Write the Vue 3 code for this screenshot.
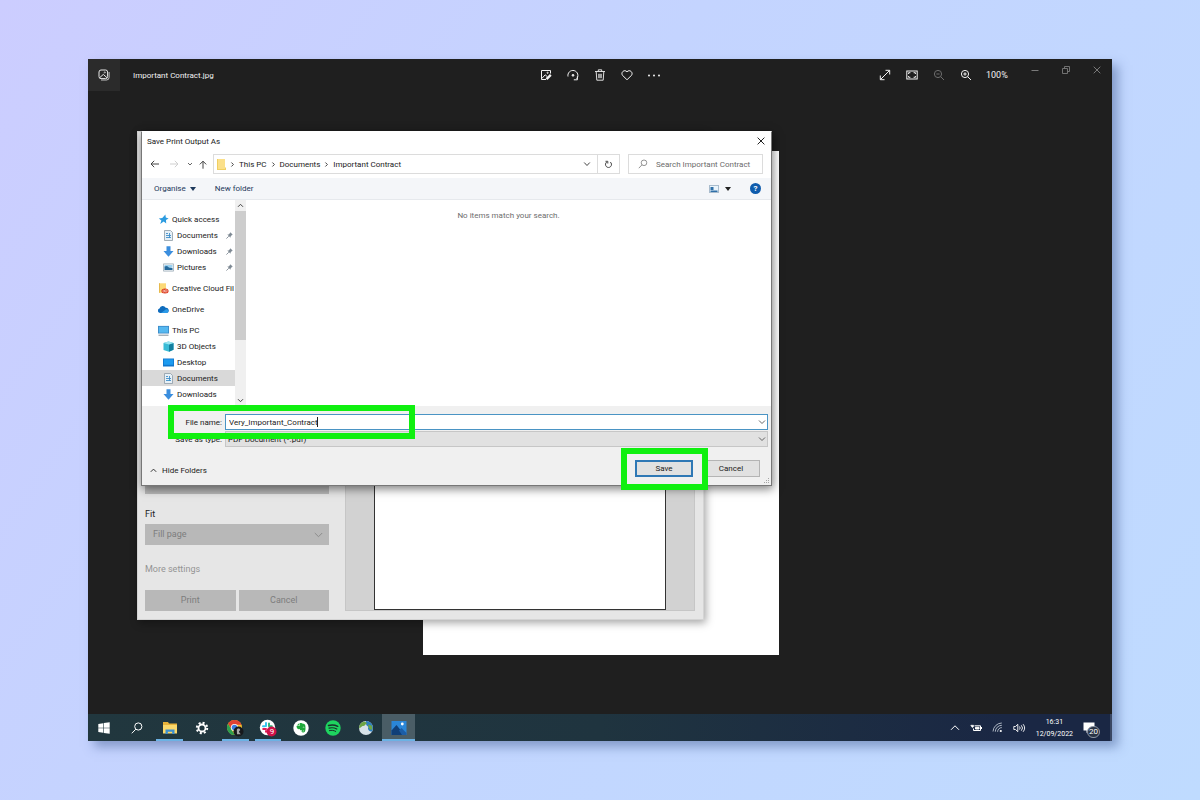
<template>
  <div class="backdrop">
    <div class="desktop">
      <header class="viewer-bar">
        <div class="viewer-title">
          <span class="app-tile">
            <svg width="12" height="12" viewBox="0 0 12 12" fill="none" stroke="#e8e8e8">
              <rect x="1" y="1" width="8.6" height="8.6" rx="2" />
              <path d="M3 11h5.5a2.6 2.6 0 0 0 2.6-2.6V3" stroke-width=".8" />
              <path d="M1.6 8.8 5.3 5.4l3.8 3.4" />
              <circle cx="6.8" cy="3.4" r=".6" stroke-width=".7" />
            </svg>
          </span>
          <h1>Important Contract.jpg</h1>
        </div>

        <div class="viewer-tools">
          <button type="button" class="tool" aria-label="Edit image">
            <svg width="12" height="12" viewBox="0 0 12 12" fill="none" stroke="#f2f2f2">
              <path d="M10.5 4.5v-3h-9v9H6M1.8 9.5l3.4-3.7 2 1.8" />
              <circle cx="7.6" cy="3.8" r=".6" />
              <path d="m6.5 10.2 4.3-4.3" stroke-width="2.4" />
            </svg>
          </button>
          <button type="button" class="tool" aria-label="Rotate">
            <svg width="12" height="12" viewBox="0 0 12 12" fill="none" stroke="#f2f2f2">
              <path d="M1 7.5A5 5 0 1 1 9.6 9.8M6.8 10.8h3.6V7.2" />
              <circle cx="6" cy="6.3" r=".9" fill="#f2f2f2" />
            </svg>
          </button>
          <button type="button" class="tool" aria-label="Delete">
            <svg width="12" height="12" viewBox="0 0 12 12" fill="none" stroke="#f2f2f2">
              <path d="M1 2.5h10M4.3 2.3V.8h3.4v1.5M2.2 2.8l.6 8.4h6.4l.6-8.4M4.8 4.8v4.4M6 4.8v4.4M7.2 4.8v4.4" stroke-width=".9" />
            </svg>
          </button>
          <button type="button" class="tool" aria-label="Favourite">
            <svg width="12" height="12" viewBox="0 0 12 12" fill="none" stroke="#f2f2f2">
              <path d="M6 10.8 1.5 6.3C-.6 3.6 3.3-.2 6 2.8c2.7-3 6.6.8 4.5 3.5Z" />
            </svg>
          </button>
          <button type="button" class="tool" aria-label="See more">
            <svg width="14" height="12" viewBox="0 0 14 12" fill="#f2f2f2">
              <circle cx="2" cy="6.5" r="1" />
              <circle cx="7" cy="6.5" r="1" />
              <circle cx="12" cy="6.5" r="1" />
            </svg>
          </button>
        </div>

        <div class="viewer-right">
          <div class="zoom-tools">
            <button type="button" class="tool" aria-label="Full screen">
              <svg width="12" height="12" viewBox="0 0 12 12" fill="none" stroke="#f2f2f2">
                <path d="M1.5 10.5 10.5 1.5M6.5 1.3h4.2v4.2M1.3 6.5v4.2h4.2" />
              </svg>
            </button>
            <button type="button" class="tool" aria-label="Fit to window">
              <svg width="12" height="12" viewBox="0 0 12 12" fill="none" stroke="#f2f2f2">
                <rect x=".8" y="2" width="10.4" height="8" />
                <path d="M2.6 5V3.7h1.8M7.6 3.7h1.8V5M9.4 7v1.3H7.6M4.4 8.3H2.6V7" />
              </svg>
            </button>
            <button type="button" class="tool" aria-label="Zoom out">
              <svg width="12" height="12" viewBox="0 0 12 12" fill="none" stroke="#6d6d6d">
                <circle cx="5" cy="5" r="3.6" />
                <path d="M7.7 7.7 11 11M3.4 5h3.2" />
              </svg>
            </button>
            <button type="button" class="tool" aria-label="Zoom in">
              <svg width="12" height="12" viewBox="0 0 12 12" fill="none" stroke="#f2f2f2">
                <circle cx="5" cy="5" r="3.6" />
                <path d="M7.7 7.7 11 11M3.3 5h3.4M5 3.3v3.4" />
              </svg>
            </button>
            <span class="zoom-level">100%</span>
          </div>
          <div class="window-controls">
            <button type="button" aria-label="Minimise">
              <svg width="8" height="8" viewBox="0 0 8 8" fill="none" stroke="#7a7a7a"><path d="M.5 4.5h7" /></svg>
            </button>
            <button type="button" aria-label="Restore">
              <svg width="8" height="8" viewBox="0 0 8 8" fill="none" stroke="#7a7a7a" stroke-width=".9">
                <path d="M.5 2.5h5v5h-5zM2.5 2.5v-2h5v5h-2" />
              </svg>
            </button>
            <button type="button" aria-label="Close">
              <svg width="8" height="8" viewBox="0 0 8 8" fill="none" stroke="#7a7a7a"><path d="m.7.7 6.6 6.6M7.3.7.7 7.3" /></svg>
            </button>
          </div>
        </div>
      </header>

      <main class="canvas">
        <div class="photo"></div>

        <section class="print-window">
          <form class="print-options" @submit.prevent>
            <select v-model="quality" class="grey-select" aria-label="Quality" disabled>
              <option>Normal</option>
            </select>
            <label for="fit">Fit</label>
            <div class="select-wrap">
              <select id="fit" v-model="fit" class="grey-select" disabled>
                <option>Fill page</option>
              </select>
              <svg width="9" height="9" viewBox="0 0 9 9" fill="none" stroke="#8c8c8c"><path d="m.8 2.5 3.7 3.7 3.7-3.7" /></svg>
            </div>
            <a href="#" class="more">More settings</a>
            <div class="print-buttons">
              <button type="button" disabled>Print</button>
              <button type="button" disabled>Cancel</button>
            </div>
          </form>
          <div class="preview">
            <div class="preview-page"></div>
          </div>
        </section>

        <section class="save-dialog">
          <div class="dialog-title">
            <h2>Save Print Output As</h2>
            <button type="button" aria-label="Close">
              <svg width="8" height="8" viewBox="0 0 8 8" fill="none" stroke="#222"><path d="m.6.6 6.8 6.8M7.4.6.6 7.4" /></svg>
            </button>
          </div>

          <div class="nav-row">
            <button type="button" class="nav-btn" aria-label="Back">
              <svg width="10" height="8" viewBox="0 0 10 8" fill="none" stroke="#444"><path d="M9 4H1M4.2.8 1 4l3.2 3.2" /></svg>
            </button>
            <button type="button" class="nav-btn" aria-label="Forward">
              <svg width="10" height="8" viewBox="0 0 10 8" fill="none" stroke="#cfcfcf"><path d="M1 4h8M5.8.8 9 4 5.8 7.2" /></svg>
            </button>
            <button type="button" class="nav-btn small" aria-label="Recent locations">
              <svg width="6" height="6" viewBox="0 0 6 6" fill="none" stroke="#666"><path d="m1 2 2 2 2-2" /></svg>
            </button>
            <button type="button" class="nav-btn small" aria-label="Up">
              <svg width="8" height="9" viewBox="0 0 8 9" fill="none" stroke="#444"><path d="M4 8.7V1.2M.8 4.4 4 1.2l3.2 3.2" /></svg>
            </button>
            <nav class="address">
              <svg class="folder" width="9" height="11" viewBox="0 0 9 11">
                <path d="M0 0h8v8l1 1v2H0z" fill="#f0cf62" />
                <path d="M1 0h7v10H1z" fill="#fbe08a" />
              </svg>
              <template v-for="crumb in crumbs" :key="crumb">
                <svg width="5" height="7" viewBox="0 0 5 7" fill="none" stroke="#444"><path d="m1.4 1.5 2 2-2 2" /></svg>
                <a href="#">{{ crumb }}</a>
              </template>
              <button type="button" class="drop" aria-label="Previous locations">
                <svg width="8" height="8" viewBox="0 0 8 8" fill="none" stroke="#444"><path d="m1.2 2.5 2.8 3 2.8-3" /></svg>
              </button>
              <button type="button" class="refresh" aria-label="Refresh">
                <svg width="9" height="9" viewBox="0 0 9 9" fill="none" stroke="#444">
                  <path d="M6.2 2a3 3 0 1 1-3.4 0M1.5 1.3h2.3v2.2" />
                </svg>
              </button>
            </nav>
            <div class="search">
              <svg width="10" height="10" viewBox="0 0 10 10" fill="none" stroke="#888" stroke-width=".9">
                <circle cx="6" cy="3.8" r="2.8" />
                <path d="M4 5.8.8 9.2" />
              </svg>
              <input v-model="search" type="text" aria-label="Search" placeholder="Search Important Contract" />
            </div>
          </div>

          <div class="command-bar">
            <button type="button">
              Organise
              <svg width="6" height="4" viewBox="0 0 6 4" fill="#1e395b"><path d="M0 0h6L3 4z" /></svg>
            </button>
            <button type="button">New folder</button>
            <button type="button" class="view-btn" aria-label="Change view">
              <svg width="10" height="8" viewBox="0 0 10 8">
                <path d="M0 0h10v8H0z" fill="#a9bccd" />
                <path d="M1 1h8v6H1z" fill="#eaf4fb" />
                <path d="M1.5 2h3v3h-3zM1.5 5.5h7V7h-7z" fill="#2f6fa8" />
              </svg>
              <svg width="6" height="4" viewBox="0 0 6 4" fill="#222"><path d="M0 0h6L3 4z" /></svg>
            </button>
            <button type="button" class="help" aria-label="Help">?</button>
          </div>

          <div class="dialog-body">
            <nav class="tree">
              <ul v-for="(group, i) in tree" :key="i">
                <li v-for="item in group" :key="item.name">
                  <a href="#" :class="{ child: item.child, selected: item.selected }">
                    <svg v-if="item.icon === 'star'" width="11" height="11" viewBox="0 0 11 11">
                      <path d="m7.4.5.4 3 2.8.9L8 6l.2 3.400-2.500-2-3.500 2.600 1.200-3.500L.8 4.600l3.500-.5z" fill="#2b9be0" />
                    </svg>
                    <svg v-else-if="item.icon === 'document'" width="11" height="11" viewBox="0 0 11 11">
                      <path d="M1.500.5h6l2 2v8h-8z" fill="#e6f0f7" stroke="#8d9aa5" stroke-width=".8" />
                      <path d="M3 3.500h2M3 5.500h5M3 7.500h5M6.500 3v5" stroke="#3f8fc9" stroke-width=".9" />
                    </svg>
                    <svg v-else-if="item.icon === 'download'" width="11" height="11" viewBox="0 0 11 11">
                      <path d="M3.500.3h4V5h3l-5 5.800L.5 5h3z" fill="#3b8ede" />
                    </svg>
                    <svg v-else-if="item.icon === 'picture'" width="11" height="11" viewBox="0 0 11 11">
                      <path d="M.4 1.900h10.200v7.200H.4z" fill="#f4f8fb" stroke="#9ba9b5" stroke-width=".8" />
                      <path d="M1.500 3h8v2.500h-8z" fill="#9bd2f2" />
                      <path d="M1.500 4.500 4 4l2 1.600 3.500.4v2h-8z" fill="#256a9c" />
                    </svg>
                    <svg v-else-if="item.icon === 'cloud-folder'" width="11" height="11" viewBox="0 0 11 11">
                      <path d="M1 .3h7v9.500H1z" fill="#fcd978" />
                      <path d="M1 .3h1v9.500H1z" fill="#e6b94c" />
                      <ellipse cx="7" cy="8" rx="3.600" ry="2.500" fill="#dc3b1f" />
                      <circle cx="5.800" cy="8.100" r="1" fill="none" stroke="#fff" stroke-width=".5" />
                      <circle cx="8" cy="7.900" r="1.200" fill="none" stroke="#fff" stroke-width=".5" />
                    </svg>
                    <svg v-else-if="item.icon === 'onedrive'" width="11" height="11" viewBox="0 0 11 11">
                      <path d="M2.200 9A2.300 2.300 0 0 1 1.500 4.500 3.400 3.400 0 0 1 7.700 3.800 2.700 2.700 0 0 1 9 9z" fill="#0f6cbd" />
                      <path d="M3 9 8 5.300A1.900 1.900 0 0 1 9 9z" fill="#2b9ae8" />
                    </svg>
                    <svg v-else-if="item.icon === 'pc'" width="11" height="11" viewBox="0 0 11 11">
                      <path d="M0 .9h11v7.600H0z" fill="#3b87c4" />
                      <path d="M.8 1.700h9.400v6H.8z" fill="#55b8f0" />
                      <path d="M.5 10.200h10" stroke="#7e8e9a" />
                    </svg>
                    <svg v-else-if="item.icon === 'cube'" width="11" height="11" viewBox="0 0 11 11">
                      <path d="m.5 2 5-1.500L10.500 2v6.700l-4.500 2L.5 9z" fill="#39bcd6" />
                      <path d="m6 3.500 4.500-1.500v6.700l-4.500 2z" fill="#14809f" />
                      <path d="m.5 2 5-1.500L10.500 2 6 3.500z" fill="#9be6f1" />
                    </svg>
                    <svg v-else width="11" height="11" viewBox="0 0 11 11">
                      <path d="M0 1.500h11v8H0z" fill="#1176cc" />
                      <path d="M.8 2.300h9.400v5.500H.8z" fill="#1c9bf0" />
                    </svg>
                    <span>{{ item.name }}</span>
                    <svg v-if="item.pinned" class="pin" width="7" height="7" viewBox="0 0 7 7">
                      <path d="m4.300.2 2.500 2.500-.9.300-1.300 1.400-.1 1.400L1.300 2.600l1.400-.2L4 1.100z" fill="#7f8a94" />
                      <path d="M2.800 4.200.4 6.600" stroke="#7f8a94" stroke-width=".9" />
                    </svg>
                  </a>
                </li>
              </ul>
            </nav>
            <div class="scrollbar">
              <svg width="7" height="7" viewBox="0 0 7 7" fill="none" stroke="#444"><path d="m1 4.800 2.500-2.500L6 4.800" /></svg>
              <div class="track"><div class="thumb"></div></div>
              <svg width="7" height="7" viewBox="0 0 7 7" fill="none" stroke="#444"><path d="m1 2.200 2.500 2.500L6 2.200" /></svg>
            </div>
            <p class="empty">No items match your search.</p>
          </div>

          <form class="dialog-footer" @submit.prevent>
            <div class="field">
              <label for="file-name">File name:</label>
              <div class="select-wrap">
                <input id="file-name" v-model="fileName" type="text" />
                <span class="caret"></span>
                <svg width="8" height="8" viewBox="0 0 8 8" fill="none" stroke="#555" stroke-width=".9"><path d="m1 2.5 3 3 3-3" /></svg>
              </div>
            </div>
            <div class="field">
              <label for="file-type">Save as type:</label>
              <div class="select-wrap">
                <select id="file-type" v-model="fileType">
                  <option>PDF Document (*.pdf)</option>
                </select>
                <svg width="8" height="8" viewBox="0 0 8 8" fill="none" stroke="#555" stroke-width=".9"><path d="m1 2.5 3 3 3-3" /></svg>
              </div>
            </div>
            <div class="actions">
              <button type="button" class="hide-folders">
                <svg width="7" height="7" viewBox="0 0 7 7" fill="none" stroke="#333"><path d="m.8 4.800 2.700-2.700 2.700 2.700" /></svg>
                Hide Folders
              </button>
              <button type="submit" class="save">Save</button>
              <button type="button" class="cancel">Cancel</button>
            </div>
          </form>
          <svg class="grip" width="6" height="6" viewBox="0 0 6 6" fill="#a5a5a5">
            <path d="M4 0h1v1H4zM4 2h1v1H4zM2 2h1v1H2zM4 4h1v1H4zM2 4h1v1H2zM0 4h1v1H0z" />
          </svg>
          <div class="mark mark-name"></div>
          <div class="mark mark-save"></div>
        </section>
      </main>

      <footer class="taskbar">
        <div class="apps">
          <button type="button" aria-label="Start">
            <svg width="12" height="12" viewBox="0 0 12 12" fill="#fff">
              <path d="m.3 1.900 4.900-.7v4.500H.3zM5.800 1.100 11.700.3v5.400H5.800zM.3 6.300h4.900v4.500l-4.900-.7zM5.800 6.300h5.900v5.400l-5.900-.8z" />
            </svg>
          </button>
          <button type="button" aria-label="Search">
            <svg width="12" height="12" viewBox="0 0 12 12" fill="none" stroke="#fff">
              <circle cx="7.300" cy="4.500" r="3.600" />
              <path d="M4.800 7.200.8 11.300" />
            </svg>
          </button>
          <button type="button" class="running" aria-label="File Explorer">
            <svg width="16" height="14" viewBox="0 0 16 14">
              <path d="M1 1h5l1 1.500h8V12H1z" fill="#e9b33a" />
              <path d="M1 4h14v8.500H1z" fill="#fbd96c" />
              <path d="M3.500 13V8.500h9V13h-2.300v-2.300H5.800V13z" fill="#3d8fd0" />
            </svg>
          </button>
          <button type="button" aria-label="Settings">
            <svg width="14" height="14" viewBox="0 0 14 14" fill="none" stroke="#fff">
              <circle cx="7" cy="7" r="3.500" stroke-width="1.800" />
              <circle cx="7" cy="7" r="5.200" stroke-width="2" stroke-dasharray="2.040 2.040" />
            </svg>
          </button>
          <button type="button" class="running" aria-label="Chrome">
            <svg width="18" height="18" viewBox="0 0 18 18">
              <circle cx="8.500" cy="8.500" r="7.500" fill="#f6c12d" />
              <path d="M2 4.800a7.500 7.500 0 0 1 13.500.9H8.500L5.300 10z" fill="#df4132" />
              <path d="M2 4.800 6 11.500l3 4.500A7.500 7.500 0 0 1 2 4.800" fill="#2d9e4f" />
              <circle cx="8.500" cy="8.500" r="3.600" fill="#fff" />
              <circle cx="8.500" cy="8.500" r="2.800" fill="#3b7de0" />
              <circle cx="12.500" cy="12.500" r="5" fill="#17191c" />
              <path d="M10.800 11c.4-2 3.400-1.800 3.400.2l-1.200 1 .3 1.300 1.500 1.700h-3.800z" fill="#a9a9a9" />
            </svg>
          </button>
          <button type="button" class="running" aria-label="Slack">
            <svg width="18" height="18" viewBox="0 0 18 18">
              <circle cx="8.500" cy="8.500" r="7.700" fill="#fff" />
              <g fill="none" stroke-width="2" stroke-linecap="round">
                <path d="M7 4v3M4 7.200h1.500" stroke="#36c5f0" />
                <path d="M10 4.500V7M12.800 7.200H10" stroke="#2eb67d" />
                <path d="M4.200 10H7M7 12.800V12" stroke="#e01e5a" />
              </g>
              <circle cx="12.500" cy="12.500" r="5" fill="#cf1047" />
            </svg>
            <span class="count">9</span>
          </button>
          <button type="button" aria-label="Evernote">
            <svg width="16" height="16" viewBox="0 0 16 16">
              <circle cx="8" cy="8" r="7.700" fill="#fff" />
              <path d="M6.600 3.300c1.500-.5 2.700-.2 3.200.4 2.500.2 2.700 1.300 2.700 4.300s-.6 4.600-2.300 4.600c-1.900 0-2.200-2-.8-2.600-1.700.7-2.600.2-2.700-1-1.900.6-3.100-.7-3.200-3h3.100z" fill="#1fa83a" />
              <path d="M3.700 5.500 6.100 3.300v2.200z" fill="#1fa83a" />
              <path d="M10 7.600c.2-.7 1-.7 1.300.1M9.900 11.500c0-.6.600-.8 1.100-.7" fill="none" stroke="#fff" stroke-width=".6" />
            </svg>
          </button>
          <button type="button" aria-label="Spotify">
            <svg width="16" height="16" viewBox="0 0 16 16">
              <circle cx="8" cy="8" r="7.700" fill="#1ed45f" />
              <g fill="none" stroke="#17302a" stroke-linecap="round">
                <path d="M3.500 5.500c3-.9 6.500-.6 9.200.8" stroke-width="1.500" />
                <path d="M4 8.200c2.700-.8 5.500-.4 7.800.8" stroke-width="1.200" />
                <path d="M4.400 10.600c2.300-.6 4.500-.3 6.300.8" />
              </g>
            </svg>
          </button>
          <button type="button" aria-label="Browser">
            <svg width="16" height="16" viewBox="0 0 16 16">
              <circle cx="8" cy="8" r="7" fill="#d7e2e8" />
              <path d="M8 1a7 7 0 0 1 6 10.500C11 12 9 9 10.500 7 8.500 5.500 7 4 8 1" fill="#2c7fc0" />
              <path d="M3 3.200C6 .8 8 1.500 9 3.500 7 4 7 6.500 4.500 6L1.300 8.500C1 6.500 1.500 4.500 3 3.200M10 4.500l3.500 1c1 2 .8 3 .2 4.500L11 8.500z" fill="#6da544" />
            </svg>
          </button>
          <button type="button" class="running current" aria-label="Photos">
            <svg width="16" height="16" viewBox="0 0 16 16">
              <path d="M.5 1h15v14H.5z" fill="#2a86d8" />
              <path d="M.5 10.500 5.500 5l8 10h-13z" fill="#103f78" />
              <path d="m8 10.500 2.500-2.500 5 5v2H11z" fill="#1c5da6" />
              <circle cx="11.300" cy="4" r="1.400" fill="#fff" />
            </svg>
          </button>
        </div>
        <div class="tray">
          <svg width="10" height="10" viewBox="0 0 10 10" fill="none" stroke="#fff"><path d="m1 6.800 4-4 4 4" /></svg>
          <svg width="12" height="10" viewBox="0 0 12 10" fill="none" stroke="#fff">
            <path d="M4.500 2.800h6v4.700h-7V5.500" />
            <path d="M5.500 4.300h3.500V6H5.500z" fill="#fff" />
            <path d="M.8 2.300h2.700v1.300L2.300 4.500z" fill="#fff" stroke-width=".7" />
            <path d="M11.500 4v2" />
          </svg>
          <svg width="11" height="11" viewBox="0 0 11 11" fill="none" stroke="#bcc5d0" stroke-width=".9">
            <path d="M1 9.500A9 9 0 0 1 9.800 1M3.300 9.700a6.500 6.500 0 0 1 6.500-6.400M5.600 9.800a4.200 4.200 0 0 1 4.200-4.200" />
            <circle cx="8.800" cy="9" r="1.100" fill="#fff" stroke="none" />
          </svg>
          <svg width="13" height="10" viewBox="0 0 13 10" fill="none" stroke="#fff" stroke-width=".9">
            <path d="M.8 3.500h1.700L4.800 1.300v7.400L2.500 6.500H.8zM6.500 3.500a2.200 2.200 0 0 1 0 3M8.300 2.300a4 4 0 0 1 0 5.400M10.100 1.200a6 6 0 0 1 0 7.600" />
          </svg>
          <div class="clock">
            <span>16:31</span>
            <span>12/09/2022</span>
          </div>
          <button type="button" class="notices" aria-label="Notifications">
            <svg width="12" height="12" viewBox="0 0 12 12" fill="#fff"><path d="M.5.500h11v8H6L3.500 11V8.500h-3z" /></svg>
            <span>20</span>
          </button>
        </div>
      </footer>
    </div>
  </div>
</template>

<script setup>
import { ref } from 'vue'

const quality = ref('Normal')
const fit = ref('Fill page')
const search = ref('')
const fileName = ref('Very_Important_Contract')
const fileType = ref('PDF Document (*.pdf)')

const crumbs = ['This PC', 'Documents', 'Important Contract']

const tree = [
  [
    { name: 'Quick access', icon: 'star' },
    { name: 'Documents', icon: 'document', child: true, pinned: true },
    { name: 'Downloads', icon: 'download', child: true, pinned: true },
    { name: 'Pictures', icon: 'picture', child: true, pinned: true }
  ],
  [{ name: 'Creative Cloud Fil', icon: 'cloud-folder' }],
  [{ name: 'OneDrive', icon: 'onedrive' }],
  [
    { name: 'This PC', icon: 'pc' },
    { name: '3D Objects', icon: 'cube', child: true },
    { name: 'Desktop', icon: 'desktop', child: true },
    { name: 'Documents', icon: 'document', child: true, selected: true },
    { name: 'Downloads', icon: 'download', child: true }
  ]
]
</script>

<style>
body {
  margin: 0;
}
</style>

<style scoped>
* {
  box-sizing: border-box;
}

.backdrop {
  display: flex;
  min-height: 100vh;
  padding: 59px 88px;
  background: linear-gradient(125deg, #cccdff 0%, #c4d4ff 40%, #bfdbff 100%);
  font-family: Roboto, 'Open Sans', sans-serif;
  font-size: 8px;
  line-height: 13px;
  color: #1a1a1a;
}

button,
input,
select {
  margin: 0;
  padding: 0;
  border: 0;
  border-radius: 0;
  background: none;
  font: inherit;
  color: inherit;
  appearance: none;
  outline: none;
}

button {
  display: flex;
  align-items: center;
  justify-content: center;
}

a {
  color: inherit;
  text-decoration: none;
}

h1,
h2,
p,
ul {
  margin: 0;
  padding: 0;
  font: inherit;
  list-style: none;
}

svg {
  display: block;
  flex: none;
}

.desktop {
  flex: 1;
  display: flex;
  flex-direction: column;
  min-width: 0;
  background: #1f1f1f;
  box-shadow: 6px 6px 10px rgba(70, 95, 150, 0.5);
}

/* photo viewer bar */
.viewer-bar {
  display: grid;
  grid-template-columns: 1fr auto 1fr;
  height: 32px;
  color: #f2f2f2;
}

.viewer-title {
  display: flex;
  align-items: center;
  gap: 13px;
}

.app-tile {
  display: flex;
  align-items: center;
  justify-content: center;
  width: 32px;
  height: 32px;
  background: #2b2b2b;
}

.viewer-tools,
.zoom-tools {
  display: flex;
  align-items: center;
}

.tool {
  width: 27px;
  height: 32px;
}

.viewer-right {
  display: flex;
  justify-content: flex-end;
}

.zoom-level {
  width: 40px;
  padding-left: 7px;
  font-size: 9px;
}

.window-controls {
  display: flex;
}

.window-controls button {
  width: 31px;
  height: 21px;
}

/* windows */
.canvas {
  position: relative;
  flex: 1;
}

.photo {
  position: absolute;
  top: 60px;
  left: 335px;
  width: 356px;
  height: 504px;
  background: #fff;
}

.print-window {
  position: absolute;
  top: 40px;
  left: 49px;
  display: flex;
  gap: 16px;
  width: 567px;
  height: 489px;
  padding: 8px 8px 8px 7px;
  background: #e6e6e6;
  border: 1px solid #d4d4d4;
  box-shadow: 2px 3px 8px rgba(0, 0, 0, 0.35);
  font-size: 9px;
  color: #7d7d7d;
}

.print-options {
  display: flex;
  flex-direction: column;
  justify-content: flex-end;
  width: 184px;
}

.print-options label {
  padding: 14px 0 3px;
  color: #222;
}

.grey-select {
  width: 100%;
  height: 21px;
  padding-left: 8px;
  background: #b8b8b8;
  color: #7d7d7d;
  opacity: 1;
}

.more {
  padding: 18px 0 14px;
  color: #949494;
}

.print-buttons {
  display: flex;
  gap: 3px;
}

.print-buttons button {
  flex: 1;
  height: 21px;
  background: #b8b8b8;
  color: #7d7d7d;
}

.preview {
  flex: 1;
  padding: 0 28px;
  background: #d2d2d2;
  border: 1px solid #c6c6c6;
}

.preview-page {
  height: 100%;
  background: #fff;
  border: 1px solid #333;
}

.select-wrap {
  position: relative;
  flex: 1;
}

.print-options .select-wrap {
  flex: none;
}

.select-wrap svg {
  position: absolute;
  top: 50%;
  right: 6px;
  transform: translateY(-50%);
  pointer-events: none;
}

/* save dialog */
.save-dialog {
  position: absolute;
  top: 40px;
  left: 53px;
  display: flex;
  flex-direction: column;
  width: 631px;
  height: 355px;
  background: #fff;
  border: 1px solid #777;
  border-top-color: #fff;
  box-shadow: 1px 3px 9px rgba(0, 0, 0, 0.5);
}

.dialog-title {
  display: flex;
  align-items: center;
  justify-content: space-between;
  height: 18px;
  padding: 0 6px 0 5px;
}

.nav-row {
  display: flex;
  align-items: center;
  height: 28px;
  padding: 0 8px 0 3px;
}

.nav-btn {
  width: 19px;
  height: 20px;
}

.nav-btn.small {
  width: 13px;
}

.address {
  flex: 1;
  display: flex;
  align-items: center;
  gap: 4px;
  height: 20px;
  margin-left: 4px;
  padding-left: 3px;
  border: 1px solid #dcdcdc;
}

.drop {
  width: 20px;
  height: 18px;
  margin-left: auto;
}

.refresh {
  width: 22px;
  height: 18px;
  margin-left: -4px;
  border-left: 1px solid #dcdcdc;
}

.search {
  display: flex;
  align-items: center;
  gap: 8px;
  width: 135px;
  height: 20px;
  margin-left: 8px;
  padding-left: 9px;
  border: 1px solid #dcdcdc;
}

.search input {
  flex: 1;
  min-width: 0;
}

.search input::placeholder {
  color: #6b6b6b;
  opacity: 1;
}

.command-bar {
  display: flex;
  align-items: center;
  gap: 19px;
  height: 22px;
  padding: 0 10px 0 12px;
  background: #f4f6f9;
  border-bottom: 1px solid #e6e9ed;
  color: #1e395b;
}

.command-bar button {
  gap: 4px;
}

.command-bar .view-btn {
  gap: 6px;
  margin-left: auto;
}

.command-bar .help {
  width: 11px;
  height: 11px;
  border-radius: 50%;
  background: #0f5cad;
  color: #fff;
  font-weight: 700;
}

.dialog-body {
  flex: 1;
  display: flex;
  min-height: 0;
}

.tree {
  display: flex;
  flex-direction: column;
  gap: 5px;
  width: 93px;
  padding-top: 11px;
  overflow: hidden;
}

.tree a {
  display: flex;
  align-items: center;
  gap: 3px;
  height: 16px;
  padding-left: 16px;
  white-space: nowrap;
}

.tree a.child {
  padding-left: 21px;
}

.tree a.selected {
  background: #d9d9d9;
}

.pin {
  margin: 0 2px 0 auto;
}

.scrollbar {
  display: flex;
  flex-direction: column;
  align-items: center;
  width: 11px;
  padding: 2px 0;
  background: #f0f0f0;
}

.track {
  flex: 1;
  width: 100%;
  padding-top: 2px;
}

.thumb {
  height: 129px;
  background: #cdcdcd;
}

.empty {
  flex: 1;
  padding-top: 9px;
  text-align: center;
  color: #6d6d6d;
}

.dialog-footer {
  display: flex;
  flex-direction: column;
  gap: 1px;
  height: 79px;
  padding: 8px 3px 0 8px;
  background: #f0f0f0;
}

.field {
  display: flex;
  align-items: center;
  gap: 3px;
}

.field label {
  width: 72px;
  text-align: right;
}

.field input,
.field select {
  display: block;
  width: 100%;
  height: 16px;
  padding: 0 3px;
  border: 1px solid #4a94c4;
  background: #fff;
}

.field select {
  padding: 0 2px;
  border-color: #c6c6c6;
  background: #e1e1e1;
}

.field .select-wrap svg {
  right: 2px;
}

.caret {
  position: absolute;
  top: 3px;
  left: 92px;
  width: 1px;
  height: 10px;
  background: #222;
}

.actions {
  display: flex;
  align-items: center;
  gap: 9px;
  padding: 12px 8px 0 0;
}

.actions .save,
.actions .cancel {
  width: 58px;
  height: 17px;
  background: #e1e1e1;
  border: 1px solid #b4b4b4;
}

.actions .save {
  border: 2px solid #2f78b5;
}

.hide-folders {
  gap: 5px;
  margin-right: auto;
  padding-top: 3px;
}

.grip {
  position: absolute;
  right: 1px;
  bottom: 1px;
}

.mark {
  position: absolute;
  border: 6px solid #10f010;
  pointer-events: none;
}

.mark-name {
  top: 273px;
  left: 26px;
  width: 247px;
  height: 34px;
}

.mark-save {
  top: 316px;
  left: 479px;
  width: 87px;
  height: 42px;
}

/* taskbar */
.taskbar {
  display: flex;
  justify-content: space-between;
  height: 27px;
  background: linear-gradient(90deg, #21373e, #1f343f 50%, #1a2744 90%);
  color: #fff;
}

.apps {
  display: grid;
  grid-template-columns: repeat(10, 1fr);
  width: 327px;
}

.apps button {
  position: relative;
}

.running::after {
  content: '';
  position: absolute;
  right: 3px;
  bottom: 0;
  left: 3px;
  height: 2px;
  background: #6cb2e4;
}

.running.current {
  background: #4a5d66;
}

.running.current::after {
  right: 0;
  left: 0;
}

.count {
  position: absolute;
  right: 10px;
  bottom: 4px;
  font-size: 8px;
  line-height: 10px;
}

.tray {
  display: flex;
  align-items: center;
  gap: 10px;
  padding-right: 10px;
  border-right: 2px solid #3a4763;
}

.clock {
  font-size: 7px;
  line-height: 12px;
  text-align: center;
}

.clock span {
  display: block;
}

.notices {
  position: relative;
  width: 17px;
  height: 20px;
  justify-content: flex-start;
}

.notices span {
  position: absolute;
  right: 0;
  bottom: 0;
  width: 13px;
  border: 1px solid #8d96a5;
  border-radius: 6px;
  background: #2a3446;
  font-size: 8px;
  line-height: 10px;
}
</style>
